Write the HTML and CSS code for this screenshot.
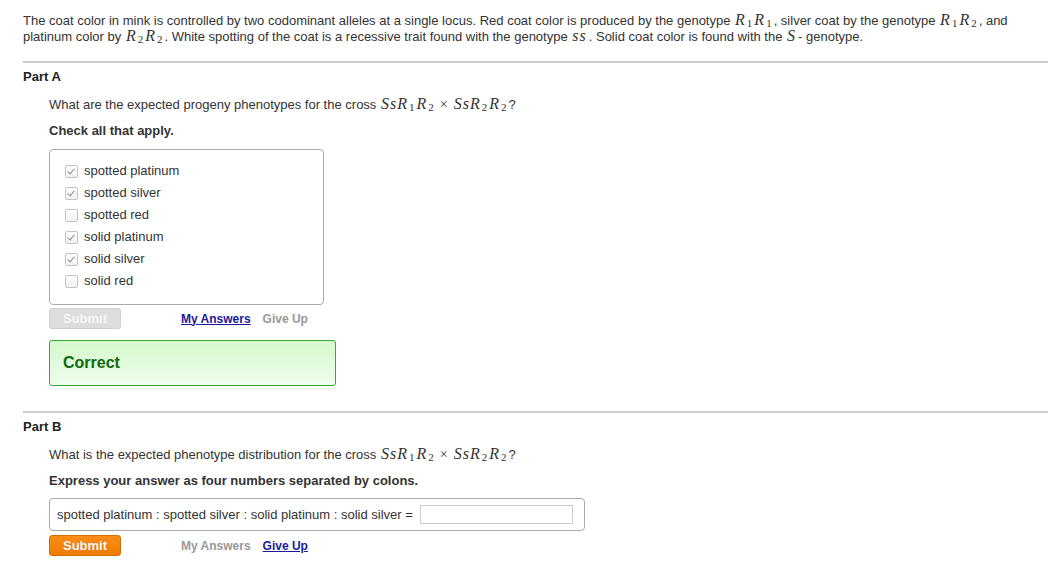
FILE: index.html
```html
<!DOCTYPE html>
<html lang="en">
<head>
  <meta charset="UTF-8" />
  <title>Mink coat color</title>
  <link rel="stylesheet" href="styles.css">
</head>
<body>
  <div class="problem">
    <p class="intro">
      The coat color in mink is controlled by two codominant alleles at a single locus. Red coat color is produced by the genotype
      <span class="math"><i>R</i><sub>1</sub><i>R</i><sub>1</sub></span>, silver coat by the genotype
      <span class="math"><i>R</i><sub>1</sub><i>R</i><sub>2</sub></span>, and platinum color by
      <span class="math"><i>R</i><sub>2</sub><i>R</i><sub>2</sub></span>. White spotting of the coat is a recessive trait found with the genotype
      <span class="math"><i>ss</i></span>. Solid coat color is found with the <span class="math"><i>S</i></span>- genotype.
    </p>

    <!-- Part A -->
    <section class="part">
      <h2>Part A</h2>
      <div class="part-body">
        <p class="question">What are the expected progeny phenotypes for the cross
          <span class="math"><i>SsR</i><sub>1</sub><i>R</i><sub>2</sub><span class="times">&times;</span><i>SsR</i><sub>2</sub><i>R</i><sub>2</sub></span>?</p>
        <p class="instr">Check all that apply.</p>

        <div class="answer-box choices">
          <label class="choice"><span class="box checked"></span>spotted platinum</label>
          <label class="choice"><span class="box checked"></span>spotted silver</label>
          <label class="choice"><span class="box"></span>spotted red</label>
          <label class="choice"><span class="box checked"></span>solid platinum</label>
          <label class="choice"><span class="box checked"></span>solid silver</label>
          <label class="choice"><span class="box"></span>solid red</label>
        </div>

        <div class="actions">
          <span class="btn btn-disabled">Submit</span>
          <a class="link" href="#">My Answers</a>
          <span class="link-off">Give Up</span>
        </div>

        <div class="feedback">Correct</div>
      </div>
    </section>

    <!-- Part B -->
    <section class="part">
      <h2>Part B</h2>
      <div class="part-body">
        <p class="question">What is the expected phenotype distribution for the cross
          <span class="math"><i>SsR</i><sub>1</sub><i>R</i><sub>2</sub><span class="times">&times;</span><i>SsR</i><sub>2</sub><i>R</i><sub>2</sub></span>?</p>
        <p class="instr">Express your answer as four numbers separated by colons.</p>

        <div class="answer-box entry">
          <span>spotted platinum : spotted silver : solid platinum : solid silver =</span>
          <span class="field"></span>
        </div>

        <div class="actions actions-b">
          <span class="btn btn-submit">Submit</span>
          <span class="link-off">My Answers</span>
          <a class="link" href="#">Give Up</a>
        </div>
      </div>
    </section>
  </div>
</body>
</html>
```

FILE: styles.css
```css
body {
  margin: 0;
  font-family: 'Liberation Sans', Arial, sans-serif;
  font-size: 13px;
  color: #333;
  background: #fff;
}
.problem {
  padding: 13px 14px 0 23px;
}
.intro {
  margin: 0;
  line-height: 16px;
}
.math {
  font-family: 'Liberation Serif', 'Times New Roman', serif;
  font-size: 16px;
  line-height: 0;
  color: #333;
  white-space: nowrap;
  margin: 0 2px 0 1px;
}
.math i {
  font-style: italic;
  letter-spacing: 1px;
}
.math sub {
  font-size: 11px;
  vertical-align: -2px;
  line-height: 0;
  margin: 0 2px 0 1px;
}
.math sub:last-child {
  margin-right: 0;
}
.times {
  margin: 0 6px 0 4px;
  font-size: 14px;
}
.part {
  border-top: 2px solid #ccc;
  margin-top: 16px;
}
.part + .part {
  margin-top: 25px;
}
h2 {
  font-size: 13px;
  font-weight: bold;
  color: #222;
  margin: 6px 0 0;
  line-height: 16px;
}
.part-body {
  padding-left: 26px;
}
.question {
  margin: 12px 0 0;
  line-height: 16px;
}
.instr {
  margin: 10px 0 0;
  font-weight: bold;
  line-height: 16px;
}
.answer-box {
  border: 1px solid #aaa;
  border-radius: 4px;
  background: #fff;
}
.choices {
  width: 258px;
  margin-top: 10px;
  padding: 13px 0 15px 15px;
  display: flex;
  flex-direction: column;
  gap: 6px;
}
.choice {
  display: flex;
  align-items: center;
  gap: 6px;
  height: 16px;
  line-height: 16px;
}
.box {
  width: 11px;
  height: 11px;
  border: 1px solid #c4c4c4;
  border-radius: 2px;
  background: linear-gradient(#fff, #f2f2f2);
  position: relative;
}
.box.checked::after {
  content: "";
  position: absolute;
  left: 3px;
  top: 1px;
  width: 3px;
  height: 6px;
  border: solid #888;
  border-width: 0 1.5px 1.5px 0;
  transform: rotate(40deg);
}
.actions {
  display: flex;
  align-items: center;
  margin-top: 3px;
  height: 21px;
  font-weight: bold;
  font-size: 12px;
}
.actions-b {
  margin-top: 4px;
}
.btn {
  width: 72px;
  height: 21px;
  line-height: 19px;
  border-radius: 3px;
  text-align: center;
  color: #fff;
  margin-right: 60px;
  box-sizing: border-box;
  font-size: 13px;
}
.btn-disabled {
  background: #ddd;
  border: 1px solid #d0d0d0;
  color: #f6f6f6;
}
.btn-submit {
  background: linear-gradient(#f98d18, #f07c00);
  border: 1px solid #d66d00;
  text-shadow: 0 0 1px #b55a00;
}
.link {
  color: #1a1a9c;
  text-decoration: underline;
  margin-right: 12px;
}
.link-off {
  color: #999;
  margin-right: 12px;
}
.feedback {
  width: 272px;
  height: 44px;
  margin-top: 11px;
  padding-left: 13px;
  border: 1px solid #33aa33;
  border-radius: 3px;
  background: linear-gradient(#d5f8cc, #effdec);
  color: #0c6a0c;
  font-size: 16px;
  font-weight: bold;
  line-height: 44px;
}
.entry {
  width: 527px;
  height: 31px;
  margin-top: 9px;
  padding-left: 7px;
  display: flex;
  align-items: center;
  gap: 7px;
}
.field {
  width: 151px;
  height: 17px;
  border: 1px solid #ccc;
}
```
